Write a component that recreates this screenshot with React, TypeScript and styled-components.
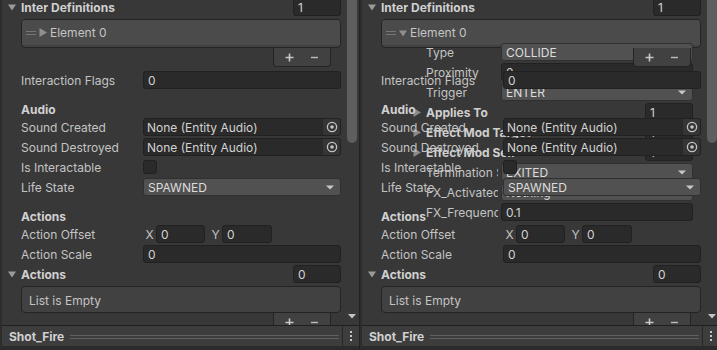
import styled, { createGlobalStyle } from "styled-components";

const GlobalStyle = createGlobalStyle`
  html, body {
    margin: 0;
    padding: 0;
    background: #1e1e1e;
    overflow: hidden;
  }
  body {
    font-family: Inter, "Noto Sans", "DejaVu Sans", sans-serif;
    font-size: 12px;
    color: #c4c4c4;
  }
`;

type ElementField = {
  label: string;
  kind: "dropdown" | "field" | "count" | "checkbox";
  value?: string;
};

// fields of the expanded "Element 0" (drawn over the rest, list height isn't updated)
const elementFields: ElementField[] = [
  { label: "Type", kind: "dropdown", value: "COLLIDE" },
  { label: "Proximity", kind: "field", value: "0" },
  { label: "Trigger", kind: "dropdown", value: "ENTER" },
  { label: "Applies To", kind: "count", value: "1" },
  { label: "Effect Mod Target", kind: "count", value: "1" },
  { label: "Effect Mod Self", kind: "count", value: "1" },
  { label: "Termination State", kind: "dropdown", value: "EXITED" },
  { label: "FX_Activated", kind: "dropdown", value: "Nothing" },
  { label: "FX_Frequency", kind: "field", value: "0.1" },
];

const Triangle = ({ dir, color = "#9a9a9a" }: { dir: "down" | "right"; color?: string }) =>
  dir === "down" ? (
    <svg width="8" height="8" viewBox="0 0 8 8">
      <path d="M0 1.5 H8 L4 7.5 Z" fill={color} />
    </svg>
  ) : (
    <svg width="8" height="9" viewBox="0 0 8 9">
      <path d="M0.5 0 V9 L8 4.5 Z" fill={color} />
    </svg>
  );

const DropArrow = () => (
  <svg width="8" height="5" viewBox="0 0 8 5">
    <path d="M0 0.5 H8 L4 4.5 Z" fill="#c8c8c8" />
  </svg>
);

const PickerIcon = () => (
  <svg width="12" height="12" viewBox="0 0 12 12">
    <circle cx="6" cy="6" r="4.6" fill="none" stroke="#c4c4c4" strokeWidth="1.3" />
    <circle cx="6" cy="6" r="1.8" fill="#c4c4c4" />
  </svg>
);

const PlusIcon = () => (
  <svg width="9" height="9" viewBox="0 0 9 9">
    <path d="M4.5 0.5 V8.5 M0.5 4.5 H8.5" stroke="#c8c8c8" strokeWidth="1.6" />
  </svg>
);

const MinusIcon = () => (
  <svg width="9" height="9" viewBox="0 0 9 9">
    <path d="M1 4.5 H8" stroke="#bdbdbd" strokeWidth="1.4" />
  </svg>
);

function Inspector({ expanded = false }: { expanded?: boolean }) {
  return (
    <Panel>
      <Content>
        <Row $gap={-2}>
          <FoldArrow>
            <Triangle dir="down" />
          </FoldArrow>
          <Label $bold>Inter Definitions</Label>
          <CountField>1</CountField>
        </Row>

        <ListBox $height={29}>
          <ElementHeader>
            <DragHandle />
            <Triangle dir={expanded ? "down" : "right"} color="#8f8f8f" />
            <span>Element 0</span>
          </ElementHeader>
          {expanded && (
            <ElementBody>
              {elementFields.map((f) => (
                <ElementRow key={f.label}>
                  <FoldSlot>{f.kind === "count" && <Triangle dir="right" color="#8a8a8a" />}</FoldSlot>
                  <ElementLabel $bold={f.kind === "count"}>{f.label}</ElementLabel>
                  {f.kind === "dropdown" && (
                    <Dropdown>
                      <span>{f.value}</span>
                      <DropArrow />
                    </Dropdown>
                  )}
                  {f.kind === "field" && <Field>{f.value}</Field>}
                  {f.kind === "count" && <CountField>{f.value}</CountField>}
                </ElementRow>
              ))}
            </ElementBody>
          )}
        </ListBox>
        <ListFooter>
          <FooterButton><PlusIcon /></FooterButton>
          <FooterButton><MinusIcon /></FooterButton>
        </ListFooter>

        <Row $gap={4}>
          <Label>Interaction Flags</Label>
          <Field>0</Field>
        </Row>

        <Row $gap={11}>
          <Label $bold>Audio</Label>
        </Row>
        <Row $gap={0}>
          <Label>Sound Created</Label>
          <ObjectField>
            <span>None (Entity Audio)</span>
            <Picker><PickerIcon /></Picker>
          </ObjectField>
        </Row>
        <Row>
          <Label>Sound Destroyed</Label>
          <ObjectField>
            <span>None (Entity Audio)</span>
            <Picker><PickerIcon /></Picker>
          </ObjectField>
        </Row>
        <Row>
          <Label>Is Interactable</Label>
          <Checkbox />
        </Row>
        <Row>
          <Label>Life State</Label>
          <Dropdown>
            <span>SPAWNED</span>
            <DropArrow />
          </Dropdown>
        </Row>

        <Row $gap={11}>
          <Label $bold>Actions</Label>
        </Row>
        <Row $gap={0}>
          <Label>Action Offset</Label>
          <AxisLabel>X</AxisLabel>
          <Field $width={49}>0</Field>
          <AxisLabel $first={false}>Y</AxisLabel>
          <Field $width={50}>0</Field>
        </Row>
        <Row>
          <Label>Action Scale</Label>
          <Field>0</Field>
        </Row>
        <Row>
          <FoldArrow>
            <Triangle dir="down" />
          </FoldArrow>
          <Label $bold>Actions</Label>
          <CountField>0</CountField>
        </Row>
        <ListBox $height={27}>
          <EmptyText>List is Empty</EmptyText>
        </ListBox>
        <ListFooter>
          <FooterButton><PlusIcon /></FooterButton>
          <FooterButton><MinusIcon /></FooterButton>
        </ListFooter>
      </Content>

      <Scrollbar>
        <Thumb />
        <ScrollArrow>
          <svg width="8" height="5" viewBox="0 0 8 5">
            <path d="M0 0 H8 L4 4.5 Z" fill="#c4c4c4" />
          </svg>
        </ScrollArrow>
      </Scrollbar>

      <TitleBar>
        <Title>Shot_Fire</Title>
        <DoubleLine />
        <Kebab>
          <i />
          <i />
          <i />
        </Kebab>
      </TitleBar>
      <BottomStrip />
    </Panel>
  );
}

export default function App() {
  return (
    <>
      <GlobalStyle />
      <Desktop>
        <Inspector />
        <Inspector expanded />
      </Desktop>
    </>
  );
}

// styles

const Desktop = styled.main`
  display: flex;
  gap: 1px;
  width: 717px;
  height: 350px;
  overflow: hidden;
  background: #232323;
`;

const Panel = styled.section`
  flex: 0 0 359px;
  height: 350px;
  display: grid;
  grid-template-columns: 1fr 16px;
  grid-template-rows: 325px 21px 1fr;
  background: #383838;
  border-left: 2px solid #2c2c2c;
  box-sizing: border-box;
`;

const Content = styled.div`
  position: relative;
  overflow: hidden;
  display: flex;
  flex-direction: column;
  padding: 0 2px 0 19px;
`;

const Row = styled.div<{ $gap?: number }>`
  position: relative;
  z-index: 2;
  display: flex;
  align-items: center;
  flex: 0 0 18px;
  margin-top: ${({ $gap }) => $gap ?? 2}px;
`;

const Label = styled.span<{ $bold?: boolean }>`
  flex: 0 0 122px;
  white-space: nowrap;
  font-weight: ${({ $bold }) => ($bold ? 700 : 400)};
  color: ${({ $bold }) => ($bold ? "#d0d0d0" : "#c4c4c4")};
`;

const FoldArrow = styled.span`
  display: flex;
  align-items: center;
  width: 14px;
  margin-left: -13px;
  margin-right: -1px;
`;

const Field = styled.div<{ $width?: number }>`
  flex: ${({ $width }) => ($width ? `0 0 ${$width}px` : "1")};
  height: 18px;
  box-sizing: border-box;
  display: flex;
  align-items: center;
  padding-left: 4px;
  background: #2a2a2a;
  border: 1px solid #212121;
  border-radius: 3px;
  color: #d2d2d2;
  white-space: nowrap;
  overflow: hidden;
`;

const CountField = styled(Field)`
  flex: 0 0 48px;
  margin-left: auto;
`;

const ObjectField = styled(Field)`
  padding-left: 3px;
  justify-content: space-between;
`;

const Picker = styled.span`
  display: flex;
  align-items: center;
  justify-content: center;
  width: 17px;
  height: 100%;
  background: #353535;
  border-radius: 0 2px 2px 0;
`;

const Dropdown = styled.div`
  flex: 1;
  height: 18px;
  box-sizing: border-box;
  display: flex;
  align-items: center;
  justify-content: space-between;
  padding: 0 6px 0 4px;
  background: #515151;
  border: 1px solid #303030;
  border-radius: 3px;
  color: #dcdcdc;
  white-space: nowrap;
`;

const Checkbox = styled.span`
  width: 14px;
  height: 14px;
  box-sizing: border-box;
  background: #2a2a2a;
  border: 1px solid #202020;
  border-radius: 3px;
`;

const AxisLabel = styled.span<{ $first?: boolean }>`
  flex: 0 0 13px;
  margin-left: ${({ $first = true }) => ($first ? 0 : 4)}px;
  text-align: center;
  color: #c4c4c4;
`;

const ListBox = styled.div<{ $height: number }>`
  position: relative;
  flex: 0 0 ${({ $height }) => $height}px;
  margin-top: 3px;
  box-sizing: border-box;
  background: #414141;
  border: 1px solid #242424;
  border-radius: 4px;
`;

const ElementHeader = styled.div`
  display: flex;
  align-items: center;
  gap: 3px;
  height: 25px;
  padding-left: 4px;
  background: #4b4b4b;
  border-radius: 3px 3px 0 0;
  color: #c4c4c4;
`;

const DragHandle = styled.span`
  width: 10px;
  height: 2px;
  border-top: 1px solid #767676;
  border-bottom: 1px solid #767676;
  margin-top: 1px;
`;

const EmptyText = styled.div`
  padding: 6px 0 0 7px;
  color: #c4c4c4;
`;

const ElementBody = styled.div`
  position: absolute;
  z-index: 1;
  top: 23px;
  left: 0;
  right: 0;
  display: flex;
  flex-direction: column;
  gap: 2px;
`;

const ElementRow = styled.div`
  display: flex;
  align-items: center;
  height: 18px;
  padding: 0 7px 0 31px;
`;

const FoldSlot = styled.span`
  flex: 0 0 13px;
  display: flex;
  align-items: center;
`;

const ElementLabel = styled.span<{ $bold?: boolean }>`
  flex: 0 0 72px;
  margin-right: 3px;
  white-space: nowrap;
  overflow: ${({ $bold }) => ($bold ? "visible" : "hidden")};
  font-weight: ${({ $bold }) => ($bold ? 700 : 400)};
  color: ${({ $bold }) => ($bold ? "#d0d0d0" : "#c4c4c4")};
`;

const ListFooter = styled.div`
  position: relative;
  z-index: 2;
  align-self: flex-end;
  flex: 0 0 19px;
  width: 58px;
  margin-right: 10px;
  box-sizing: border-box;
  display: flex;
  padding-left: 3px;
  background: #414141;
  border: 1px solid #242424;
  border-top: none;
  border-radius: 0 0 4px 4px;
`;

const FooterButton = styled.span`
  flex: 0 0 25px;
  display: flex;
  align-items: center;
  justify-content: center;
`;

const Scrollbar = styled.div`
  display: flex;
  flex-direction: column;
  padding: 0 2px 6px 4px;
`;

const Thumb = styled.div`
  height: 143px;
  background: #5e5e5e;
  border-radius: 0 0 5px 5px;
`;

const ScrollArrow = styled.div`
  margin-top: auto;
  display: flex;
  justify-content: center;
`;

const TitleBar = styled.div`
  grid-column: 1 / -1;
  display: flex;
  align-items: center;
  box-sizing: border-box;
  padding-left: 7px;
  background: #3d3d3d;
  border-top: 1px solid #1f1f1f;
`;

const Title = styled.span`
  font-weight: 700;
  color: #d0d0d0;
`;

const DoubleLine = styled.span`
  flex: 1;
  height: 2px;
  margin: 1px 3px 0 6px;
  border-top: 1px solid #606060;
  border-bottom: 1px solid #606060;
`;

const Kebab = styled.span`
  flex: 0 0 16px;
  height: 100%;
  display: flex;
  flex-direction: column;
  align-items: center;
  justify-content: center;
  gap: 2px;
  border-left: 1px solid #262626;

  i {
    width: 2px;
    height: 2px;
    background: #c4c4c4;
  }
`;

const BottomStrip = styled.div`
  grid-column: 1 / -1;
  background: #2b2b2b;
`;
